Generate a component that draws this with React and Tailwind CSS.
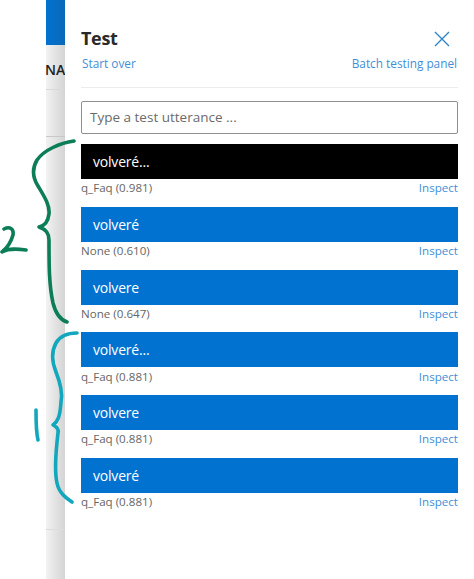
const rows = [
  { text: "volveré...", label: "q_Faq (0.981)", black: true },
  { text: "volveré", label: "None (0.610)" },
  { text: "volvere", label: "None (0.647)" },
  { text: "volveré...", label: "q_Faq (0.881)" },
  { text: "volvere", label: "q_Faq (0.881)" },
  { text: "volveré", label: "q_Faq (0.881)" },
];

function Row({ text, label, black }) {
  return (
    <div className="h-[62.8px]">
      <div className={`h-[35px] flex items-center pl-3 text-[14px] font-medium tracking-[-0.2px] text-white ${black ? "bg-black" : "bg-[#0272d0]"}`}>
        {text}
      </div>
      <div className="flex justify-between items-center h-[18px] text-[11.6px] text-[#666666]">
        <span>{label}</span>
        <a className="text-[#3f8fd6]">Inspect</a>
      </div>
    </div>
  );
}

export default function App() {
  return (
    <div className="relative w-[474px] h-[579px] overflow-hidden bg-white flex font-['Open_Sans','Liberation_Sans',sans-serif]">
      <div className="w-[46px] shrink-0" />
      <div className="w-[19px] shrink-0 overflow-hidden flex flex-col bg-gradient-to-r from-[#f2f2f2] to-[#d4d4d4]">
        <div className="h-[45px] shrink-0 bg-gradient-to-r from-[#0272d0] to-[#0a69b8]" />
        <div className="h-[45px] shrink-0 flex items-center pt-1 -ml-[1px] whitespace-nowrap text-[14px] font-semibold text-[#222222] border-b border-[#d8d8d8]">NAG</div>
        <div className="h-[47px] shrink-0 border-b border-[#c8c8c8]" />
        <div className="h-[393px] shrink-0 border-b border-[#dddddd]" />
      </div>
      <main className="flex-1 pl-4 pr-4 min-w-0">
        <header className="h-[88px] pt-[27px] border-b border-[#ececec]">
          <div className="flex justify-between items-center h-[23px]">
            <h1 className="text-[18px] font-bold tracking-[-0.3px] text-[#2a2a2a]">Test</h1>
            <svg width="16" height="16" viewBox="0 0 16 16" fill="none" stroke="#2f84c8" strokeWidth="1.4" className="mr-[8px]">
              <path d="M1 1 L15 15 M15 1 L1 15" />
            </svg>
          </div>
          <div className="flex justify-between mt-[4px] text-[11.8px] text-[#3f8fd6] leading-[18px]">
            <a className="ml-[1px]">Start over</a>
            <a className="mr-[1px]">Batch testing panel</a>
          </div>
        </header>
        <div className="mt-[13px] h-[33px] border border-[#8f8f8f] rounded-[2px] flex items-center pl-2 text-[13.5px] text-[#6b6b6b]">
          Type a test utterance ...
        </div>
        <div className="mt-[10px]">
          {rows.map((r, i) => <Row key={i} {...r} />)}
        </div>
      </main>
      <svg className="absolute left-0 top-0 pointer-events-none" width="474" height="579" fill="none" strokeLinecap="round" strokeLinejoin="round">
        <path d="M74 141 C60 143 44 150 37 160 C31 170 33 178 38 186 C44 196 50 205 49 214 C48 222 44 226 39 227 C45 229 49 232 49 240 C49 265 49 285 53 303 C56 315 61 320 67 322" stroke="#0b7d57" strokeWidth="3.6" />
        <path d="M4 229 C10 226 14 229 13 235 C11 242 7 248 2 252 C9 248 18 249 26 250" stroke="#0b7d57" strokeWidth="3.6" />
        <path d="M77 333 C68 333 60 336 56 343 C51 352 52 362 56 372 C60 382 63 392 61 402 C60 417 58 421 53 425 C57 427 59 429 58 433 C56 450 54 470 57 483 C59 493 66 498 72 502" stroke="#12a7bd" strokeWidth="3.6" />
        <path d="M36 410 C36 422 36 432 38 440" stroke="#12a7bd" strokeWidth="3.6" />
      </svg>
    </div>
  );
}
